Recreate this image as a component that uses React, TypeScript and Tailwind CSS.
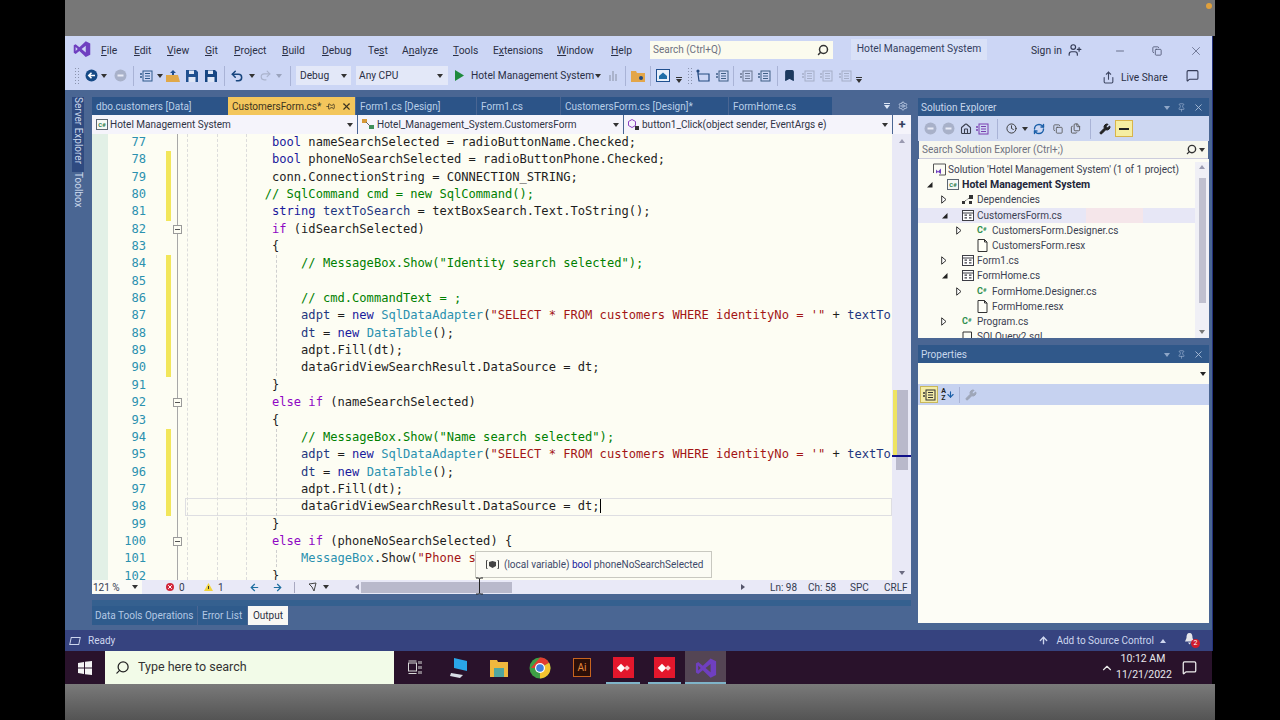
import React from "react";
import { Search, Home, Wrench, Pin, X, Settings, Minus, Undo2, Redo2, ArrowLeft, ArrowRight, ArrowUp, ArrowDown, ChevronUp, UserPlus, Copy, RefreshCw, Bookmark, MessageSquare, Share, Clock, Files } from "lucide-react";

const K = "text-[#1a1a9c]";
const C = "text-[#8f08c4]";
const S = "text-[#a31515]";
const T = "text-[#2b91af]";
const G = "text-[#008000]";
const V = "text-[#1f377f]";
const D = "text-[#1e1e1e]";

type Tok = [string, string];
type Line = { n: number; t: Tok[]; mark?: boolean; fold?: boolean; cur?: boolean };

const lines: Line[] = [
  { n: 77, t: [["            bool", K], [" nameSearchSelected = radioButtonName.Checked;", D]] },
  { n: 78, mark: true, t: [["            bool", K], [" phoneNoSearchSelected = radioButtonPhone.Checked;", D]] },
  { n: 79, mark: true, t: [["            conn.ConnectionString = CONNECTION_STRING;", D]] },
  { n: 80, mark: true, t: [["           // SqlCommand cmd = new SqlCommand();", G]] },
  { n: 81, mark: true, t: [["            string", K], [" textToSearch", V], [" = textBoxSearch.Text.ToString();", D]] },
  { n: 82, fold: true, t: [["            if", C], [" (idSearchSelected)", D]] },
  { n: 83, t: [["            {", D]] },
  { n: 84, mark: true, t: [["                // MessageBox.Show(\"Identity search selected\");", G]] },
  { n: 85, mark: true, t: [[" ", D]] },
  { n: 86, mark: true, t: [["                // cmd.CommandText = ;", G]] },
  { n: 87, mark: true, t: [["                adpt", V], [" = ", D], ["new", K], [" ", D], ["SqlDataAdapter", T], ["(", D], ["\"SELECT * FROM customers WHERE identityNo = '\"", S], [" + ", D], ["textTo", V]] },
  { n: 88, mark: true, t: [["                dt", V], [" = ", D], ["new", K], [" ", D], ["DataTable", T], ["();", D]] },
  { n: 89, mark: true, t: [["                adpt.Fill(dt);", D]] },
  { n: 90, mark: true, t: [["                dataGridViewSearchResult.DataSource = dt;", D]] },
  { n: 91, t: [["            }", D]] },
  { n: 92, fold: true, t: [["            else if", C], [" (nameSearchSelected)", D]] },
  { n: 93, t: [["            {", D]] },
  { n: 94, mark: true, t: [["                // MessageBox.Show(\"Name search selected\");", G]] },
  { n: 95, mark: true, t: [["                adpt", V], [" = ", D], ["new", K], [" ", D], ["SqlDataAdapter", T], ["(", D], ["\"SELECT * FROM customers WHERE identityNo = '\"", S], [" + ", D], ["textTo", V]] },
  { n: 96, mark: true, t: [["                dt", V], [" = ", D], ["new", K], [" ", D], ["DataTable", T], ["();", D]] },
  { n: 97, mark: true, t: [["                adpt.Fill(dt);", D]] },
  { n: 98, mark: true, cur: true, t: [["                dataGridViewSearchResult.DataSource = dt;", D]] },
  { n: 99, t: [["            }", D]] },
  { n: 100, fold: true, t: [["            else if", C], [" (phoneNoSearchSelected) {", D]] },
  { n: 101, t: [["                ", D], ["MessageBox", T], [".Show(", D], ["\"Phone s", S]] },
  { n: 102, t: [["            }", D]] },
];

const menus: [string, string, string, string][] = [
  ["", "F", "ile", "w-[33px]"],
  ["", "E", "dit", "w-[33px]"],
  ["", "V", "iew", "w-[38px]"],
  ["", "G", "it", "w-[29px]"],
  ["", "P", "roject", "w-[48px]"],
  ["", "B", "uild", "w-[40px]"],
  ["", "D", "ebug", "w-[46px]"],
  ["Te", "s", "t", "w-[34px]"],
  ["A", "n", "alyze", "w-[51px]"],
  ["", "T", "ools", "w-[40px]"],
  ["E", "x", "tensions", "w-[64px]"],
  ["", "W", "indow", "w-[54px]"],
  ["", "H", "elp", "w-[39px]"],
];

function VsLogo({ size = 18 }: { size?: number }) {
  return (
    <svg width={size} height={size} viewBox="0 0 24 24">
      <path fillRule="evenodd" fill="#6f3fc0" d="M17 1.5 23 4.5V19.5L17 22.5 8.5 14.5 3.5 18.5 1 17V7L3.5 5.5 8.5 9.5ZM17 7.5 11.5 12 17 16.5ZM3.5 9.2V14.8L6.3 12Z" />
    </svg>
  );
}
function Caret({ c = "#333" }: { c?: string }) {
  return (
    <svg width="6" height="4" viewBox="0 0 6 4" className="shrink-0">
      <path d="M0 0H6L3 4Z" fill={c} />
    </svg>
  );
}
function Sep() {
  return <div className="w-px h-[20px] bg-[#a9b3d6] shrink-0" />;
}
function Slot({ w, children }: { w: string; children?: React.ReactNode }) {
  return <div className={`${w} shrink-0 flex items-center justify-center`}>{children}</div>;
}
function Grip() {
  return <div className="w-[5px] h-[18px] shrink-0 bg-[radial-gradient(#8a93ad_1px,transparent_1px)] bg-[length:3px_3px]" />;
}
function CircleBtn({ c, arrow }: { c: string; arrow?: boolean }) {
  return (
    <svg width="13" height="13" viewBox="0 0 13 13" className="shrink-0">
      <circle cx="6.5" cy="6.5" r="6" fill={c} />
      {arrow ? <path d="M10 6.5H4M6.5 3.8 3.8 6.5 6.5 9.2" stroke="#fff" strokeWidth="1.6" fill="none" /> : <path d="M3.5 6.5H9.5" stroke="#e8ebf6" strokeWidth="2" />}
    </svg>
  );
}
function Floppy({ c = "#1f4f8f" }: { c?: string }) {
  return (
    <svg width="14" height="14" viewBox="0 0 14 14">
      <path d="M1 1H11L13 3V13H1Z" fill={c} />
      <rect x="4" y="1.5" width="5" height="3.5" fill="#dfe6f6" />
      <rect x="3.5" y="8" width="7" height="5" fill="#dfe6f6" />
    </svg>
  );
}
function SmallDocIcons({ c = "#7f8ba8" }: { c?: string }) {
  return (
    <svg width="13" height="12" viewBox="0 0 13 12" className="shrink-0">
      <rect x="3" y="1" width="9" height="10" fill="none" stroke={c} />
      <path d="M5 3.5H10M5 6H10M5 8.5H10" stroke={c} />
      <path d="M0 4H2M0 7H2" stroke={c} strokeWidth="1.5" />
    </svg>
  );
}
function FormIcon() {
  return (
    <svg width="12" height="11" viewBox="0 0 12 11">
      <rect x=".5" y=".5" width="11" height="10" fill="#fff" stroke="#3d3d45" />
      <path d="M1 3H11" stroke="#3d3d45" />
      <path d="M2.5 5.2H5M2.5 7.8H5M7 5.2H9.5M7 7.8H9.5" stroke="#3d3d45" strokeWidth="1.2" />
    </svg>
  );
}
function ResIcon() {
  return (
    <svg width="11" height="13" viewBox="0 0 11 13">
      <path d="M1 .5H7.5L10 3V12.5H1ZM7.5 .5V3H10" fill="#fffff8" stroke="#333" />
    </svg>
  );
}
function CsIcon() {
  return <span className="text-[9px] leading-none font-bold text-[#2f8f4f] whitespace-nowrap">C<span className="text-[6px] align-top">#</span></span>;
}
function ProjIcon() {
  return (
    <span className="w-[12px] h-[11px] border border-[#5c6672] bg-[#f6f8f6] flex items-center justify-center text-[6px] leading-none font-bold text-[#2f7f4f] shrink-0">C#</span>
  );
}
function DepIcon() {
  return (
    <svg width="12" height="10" viewBox="0 0 12 10">
      <path d="M3 6 8 2.5" stroke="#444" strokeDasharray="1 1" />
      <rect x="7" y="0" width="4" height="4" fill="#333" />
      <rect x="0" y="6" width="3" height="3" fill="#333" />
      <rect x="7" y="6" width="3" height="3" fill="#333" />
    </svg>
  );
}
function SolIcon() {
  return (
    <svg width="13" height="13" viewBox="0 0 13 13">
      <path d="M.5 10V1H12.5V12H6" fill="none" stroke="#555" />
      <path d="M3 6.5 5 8.5 8 5.5V11L5 9 3 10.5Z" fill="#6f3fc0" />
    </svg>
  );
}
function SqlIcon() {
  return (
    <svg width="11" height="11" viewBox="0 0 11 11">
      <path d="M1 11V1H9.5V11" fill="none" stroke="#333" />
    </svg>
  );
}
function Tri({ open }: { open?: boolean }) {
  return open ? (
    <svg width="7" height="7" viewBox="0 0 7 7">
      <path d="M6.5 1V6.5H1Z" fill="#222" />
    </svg>
  ) : (
    <svg width="6" height="9" viewBox="0 0 6 9">
      <path d="M.7 .8 5 4.5.7 8.2Z" fill="#fff" stroke="#333" />
    </svg>
  );
}

type TreeRow = { pl: string; exp?: "o" | "c"; noExp?: boolean; icon: React.ReactNode; text: string; bold?: boolean; hi?: boolean };
const tree: TreeRow[] = [
  { pl: "pl-[4px]", noExp: true, icon: <SolIcon />, text: "Solution 'Hotel Management System' (1 of 1 project)" },
  { pl: "pl-[4px]", exp: "o", icon: <ProjIcon />, text: "Hotel Management System", bold: true },
  { pl: "pl-[19px]", exp: "c", icon: <DepIcon />, text: "Dependencies" },
  { pl: "pl-[19px]", exp: "o", icon: <FormIcon />, text: "CustomersForm.cs", hi: true },
  { pl: "pl-[34px]", exp: "c", icon: <CsIcon />, text: "CustomersForm.Designer.cs" },
  { pl: "pl-[34px]", icon: <ResIcon />, text: "CustomersForm.resx" },
  { pl: "pl-[19px]", exp: "c", icon: <FormIcon />, text: "Form1.cs" },
  { pl: "pl-[19px]", exp: "o", icon: <FormIcon />, text: "FormHome.cs" },
  { pl: "pl-[34px]", exp: "c", icon: <CsIcon />, text: "FormHome.Designer.cs" },
  { pl: "pl-[34px]", icon: <ResIcon />, text: "FormHome.resx" },
  { pl: "pl-[19px]", exp: "c", icon: <CsIcon />, text: "Program.cs" },
  { pl: "pl-[19px]", icon: <SqlIcon />, text: "SQLQuery2.sql" },
];

function TitleRow() {
  return (
    <div className="h-[26px] flex items-center shrink-0 text-[#2a2f45] text-[10.3px] pt-[4px]">
      <div className="w-[36px] shrink-0 flex justify-end pr-[10px] -mt-[4px]"><VsLogo /></div>
      {menus.map(([a, u, b, w]) => (
        <div key={u + b} className={`${w} shrink-0 whitespace-nowrap`}>{a}<u>{u}</u>{b}</div>
      ))}
      <div className="w-[183px] h-[18px] bg-[#fbfbee] flex items-center justify-between px-[3px] shrink-0 text-[#6d7080] text-[10px] -mt-[3px]">
        <span>Search (Ctrl+Q)</span>
        <Search size={12} strokeWidth={3} className="text-[#333] mr-[1px] -scale-x-100" />
      </div>
      <div className="ml-[18px] w-[136px] h-[21px] bg-[#d9e1f7] text-[#34405f] flex items-center justify-center shrink-0 whitespace-nowrap -mt-[4px]">Hotel Management System</div>
      <div className="ml-[44px] w-[37px] shrink-0 whitespace-nowrap">Sign in</div>
      <UserPlus size={14} className="text-[#333a55] shrink-0 -mt-[3px]" />
      <Slot w="w-[44px] ml-[16px]"><Minus size={12} className="text-[#68708c]" /></Slot>
      <Slot w="w-[30px]"><Copy size={10} className="text-[#4d5572]" /></Slot>
      <Slot w="w-[48px]"><X size={14} strokeWidth={1.2} className="text-[#4d5572]" /></Slot>
    </div>
  );
}

function ToolRow() {
  return (
    <div className="h-[28px] pb-[1px] flex items-center shrink-0 text-[10.2px] text-[#2a2f45] pl-[9px]">
      <Grip />
      <Slot w="w-[18px] ml-[3px]"><CircleBtn c="#164a86" arrow /></Slot>
      <Slot w="w-[8px]"><Caret /></Slot>
      <Slot w="w-[16px] ml-[4px]"><CircleBtn c="#a8b1c9" /></Slot>
      <Slot w="w-[5px]" />
      <Sep />
      <Slot w="w-[24px]"><SmallDocIcons c="#2e5a8c" /></Slot>
      <Slot w="w-[4px]"><Caret /></Slot>
      <Slot w="w-[18px] ml-[2px]">
        <svg width="14" height="12" viewBox="0 0 14 12"><path d="M0 5H12L14 12H0Z" fill="#e0a848" /><path d="M7 0 10 3H8V5H6V3H4Z" fill="#1f4f8f" /></svg>
      </Slot>
      <Slot w="w-[20px]"><Floppy /></Slot>
      <Slot w="w-[18px]"><Floppy c="#174682" /></Slot>
      <Slot w="w-[4px]" />
      <Sep />
      <Slot w="w-[24px]"><Undo2 size={14} strokeWidth={2.6} className="text-[#17457e]" /></Slot>
      <Slot w="w-[6px]"><Caret /></Slot>
      <Slot w="w-[20px]"><Redo2 size={13} className="text-[#aab3cc]" /></Slot>
      <Slot w="w-[8px]"><Caret c="#9aa3bd" /></Slot>
      <Slot w="w-[7px]" />
      <Sep />
      <div className="ml-[5px] w-[55px] h-[19px] bg-[#e3e8f8] flex items-center justify-between px-[4px] shrink-0"><span>Debug</span><Caret /></div>
      <div className="ml-[5px] w-[92px] h-[19px] bg-[#e3e8f8] flex items-center justify-between px-[3px] pr-[5px] shrink-0"><span>Any CPU</span><Caret /></div>
      <Slot w="w-[23px]">
        <svg width="9" height="11" viewBox="0 0 9 11"><path d="M0 0 9 5.5 0 11Z" fill="#1e8a3c" /></svg>
      </Slot>
      <div className="w-[124px] shrink-0 whitespace-nowrap">Hotel Management System</div>
      <Slot w="w-[6px]"><Caret /></Slot>
      <Slot w="w-[24px]">
        <svg width="10" height="11" viewBox="0 0 10 11"><path d="M1 5H3V11H1ZM4 1H6V11H4ZM7 4H9V11H7Z" fill="#aab3cc" /></svg>
      </Slot>
      <Sep />
      <Slot w="w-[24px]">
        <svg width="14" height="12" viewBox="0 0 14 12"><path d="M0 1H5L6 3H14V12H0Z" fill="#e3a64a" /><circle cx="10" cy="8" r="2" fill="#234a80" /></svg>
      </Slot>
      <Sep />
      <Slot w="w-[24px]">
        <svg width="14" height="13" viewBox="0 0 14 13"><rect x=".5" y=".5" width="13" height="12" fill="#e8f0fa" stroke="#1f4f8f" /><path d="M3 7 7 3.5 11 7V10H3Z" fill="#1f6fa8" /></svg>
      </Slot>
      <Slot w="w-[7px]"><div className="border-t border-[#333] pt-px mt-[8px]"><Caret /></div></Slot>
      <Slot w="w-[8px] ml-[3px]"><Grip /></Slot>
      <Slot w="w-[20px]">
        <svg width="14" height="13" viewBox="0 0 14 13"><path d="M2 1V5M2 5H13V12H3Z" fill="none" stroke="#234a80" strokeWidth="1.2" /><circle cx="2" cy="2" r="1.6" fill="#234a80" /></svg>
      </Slot>
      <Slot w="w-[18px]"><SmallDocIcons c="#3f5f86" /></Slot>
      <Slot w="w-[2px]" />
      <Sep />
      <Slot w="w-[24px]"><SmallDocIcons c="#6a7690" /></Slot>
      <Slot w="w-[12px]"><SmallDocIcons c="#3f5f86" /></Slot>
      <Slot w="w-[7px]" />
      <Sep />
      <Slot w="w-[22px]"><Bookmark size={13} fill="#1c3a5f" className="text-[#1c3a5f]" /></Slot>
      <Slot w="w-[16px]"><SmallDocIcons c="#a5aec7" /></Slot>
      <Slot w="w-[20px]"><SmallDocIcons c="#a5aec7" /></Slot>
      <Slot w="w-[18px]"><SmallDocIcons c="#a5aec7" /></Slot>
      <Slot w="w-[10px]"><div className="border-t border-[#333] pt-px mt-[8px]"><Caret /></div></Slot>
      <div className="ml-[238px] w-[63px] flex items-center gap-[6px] shrink-0 whitespace-nowrap mt-[4px]"><Share size={13} className="text-[#3d4662] shrink-0" />Live Share</div>
      <Slot w="w-[16px] ml-[19px]"><MessageSquare size={13} className="text-[#333a55]" /></Slot>
    </div>
  );
}

const docTabs: [string, string][] = [
  ["dbo.customers [Data]", "w-[136px]"],
  ["Form1.cs [Design]", "w-[120px]"],
  ["Form1.cs", "w-[83px]"],
  ["CustomersForm.cs [Design]*", "w-[167px]"],
  ["FormHome.cs", "w-[103px]"],
];

function DocTab({ label, w }: { label: string; w: string }) {
  return <div className={`${w} h-full bg-[#2c5488] text-[#b9cfe8] pl-[4px] flex items-center shrink-0 whitespace-nowrap mr-px`}>{label}</div>;
}

function TabsRow() {
  return (
    <div className="h-[18px] flex items-center text-[10px] shrink-0">
      <DocTab label={docTabs[0][0]} w={docTabs[0][1]} />
      <div className="w-[127px] h-full bg-[#f3c65c] text-[#3b3320] pl-[4px] flex items-center justify-between pr-[3px] shrink-0 whitespace-nowrap -ml-px">
        <span>CustomersForm.cs*</span>
        <span className="flex items-center gap-[6px]"><Pin size={9} className="rotate-90" /><X size={11} strokeWidth={2.4} /></span>
      </div>
      <div className="w-px shrink-0" />
      <DocTab label={docTabs[1][0]} w={docTabs[1][1]} />
      <DocTab label={docTabs[2][0]} w={docTabs[2][1]} />
      <DocTab label={docTabs[3][0]} w={docTabs[3][1]} />
      <DocTab label={docTabs[4][0]} w={docTabs[4][1]} />
      <div className="flex-1" />
      <Slot w="w-[16px]"><div className="border-t border-[#dce6f5] pt-px"><Caret c="#dce6f5" /></div></Slot>
      <Slot w="w-[16px]"><Settings size={10} className="text-[#c6d4ea]" /></Slot>
    </div>
  );
}

function ComboRow() {
  return (
    <div className="h-[19px] flex items-center text-[10px] text-[#2f3345] shrink-0 gap-px">
      <div className="w-[265px] h-full bg-[#f5f4fb] flex items-center justify-between px-[4px] shrink-0 whitespace-nowrap">
        <span className="flex items-center gap-[1px]"><ProjIcon /><span className="ml-[1px]">Hotel Management System</span></span><Caret />
      </div>
      <div className="w-[265px] h-full bg-[#f5f4fb] flex items-center justify-between px-[4px] shrink-0 whitespace-nowrap">
        <span className="flex items-center gap-[3px]">
          <svg width="12" height="11" viewBox="0 0 12 11"><rect x="0" y="0" width="5" height="4" fill="#d79a3a" /><rect x="7" y="6" width="5" height="4" fill="#3e8f5a" /><path d="M4 3 8 7" stroke="#666" /></svg>
          Hotel_Management_System.CustomersForm
        </span><Caret />
      </div>
      <div className="w-[268px] h-full bg-[#f5f4fb] flex items-center justify-between px-[4px] shrink-0 whitespace-nowrap">
        <span className="flex items-center gap-[3px]">
          <svg width="11" height="11" viewBox="0 0 11 11"><path d="M4 .5 7.5 2.5V6.5L4 8.5.5 6.5V2.5Z" fill="none" stroke="#8a3fc0" /><rect x="7" y="7" width="4" height="4" fill="#333" /></svg>
          button1_Click(object sender, EventArgs e)
        </span><Caret />
      </div>
      <div className="flex-1 h-full bg-[#f5f4fb] flex items-center justify-center text-[13px] font-bold text-[#35405f]">+</div>
    </div>
  );
}

function EditorRow({ l }: { l: Line }) {
  return (
    <div className="h-[17.35px] flex leading-[17.35px]">
      <div className="w-[16px] shrink-0 bg-[#e2f0e6]" />
      <div className="w-[38px] shrink-0 text-right text-[#2b91af]">{l.n}</div>
      <div className="w-[20px] shrink-0" />
      <div className={`w-[5px] shrink-0 ${l.mark ? "bg-[#f2e65a]" : ""}`} />
      <div className="w-[13.6px] shrink-0 relative flex items-center justify-center">
        <div className="absolute left-[6px] inset-y-0 w-px bg-[#a8a8a8]" />
        {l.fold && <div className="relative w-[9px] h-[9px] border border-[#9a9a9a] bg-[#fdfdf3] flex items-center justify-center"><div className="w-[5px] h-px bg-[#555]" /></div>}
      </div>
      <div className={`flex-1 whitespace-pre overflow-hidden ${l.cur ? "outline outline-1 -outline-offset-1 outline-[#dedee2]" : ""}`}>
        {l.t.map(([s, c], i) => <span key={i} className={c}>{s}</span>)}
        {l.cur && <span className="border-l border-black" />}
      </div>
    </div>
  );
}

function Editor() {
  return (
    <div className="h-[446px] flex shrink-0 bg-[#fdfdf3] font-['DejaVu_Sans_Mono'] text-[12.1px]">
      <div className="flex-1 relative overflow-hidden">
        {lines.map((l) => <EditorRow key={l.n} l={l} />)}
        <div className="absolute left-[95px] inset-y-0 border-l border-dashed border-[#dcdcdc]" />
        <div className="absolute left-[125px] inset-y-0 border-l border-dashed border-[#dcdcdc]" />
        <div className="absolute left-[154px] inset-y-0 border-l border-dashed border-[#dcdcdc]" />
        <div className="absolute left-[184px] top-[121px] h-[121px] border-l border-dashed border-[#cfcfcf]" />
        <div className="absolute left-[184px] top-[295px] h-[87px] border-l border-dashed border-[#cfcfcf]" />
        <div className="absolute left-[184px] top-[416px] h-[17px] border-l border-dashed border-[#cfcfcf]" />
        <div className="absolute left-[383px] top-[417px] w-[237px] h-[27px] bg-[#fbfbf4] border border-[#c8c8c0] flex items-center pl-[10px] gap-[5px] font-['Roboto'] text-[10px] text-[#3d4a6a] whitespace-nowrap">
          <svg width="13" height="9" viewBox="0 0 13 9" className="shrink-0"><path d="M1.5 .5H.5V8.5H1.5M11.5 .5H12.5V8.5H11.5" fill="none" stroke="#444" /><path d="M3 2 6.5 1 10 2V6L6.5 8 3 6Z" fill="#444" /></svg>
          <span>(local variable) <span className="text-[#1a1a9c]">bool</span> phoneNoSearchSelected</span>
        </div>
      </div>
      <div className="w-[19px] shrink-0 bg-[#e9e9f6] flex flex-col items-center justify-between py-[5px] relative">
        <div className="rotate-180"><Caret c="#9a9ab0" /></div>
        <Caret c="#6b6b80" />
        <div className="absolute left-[4px] top-[256px] w-[12px] h-[80px] bg-[#b9b9cb]" />
        <div className="absolute left-[1px] top-[256px] w-[4px] h-[66px] bg-[#efe462]" />
        <div className="absolute left-0 top-[321px] w-[19px] h-[2px] bg-[#10108a]" />
      </div>
    </div>
  );
}

function EditorBar() {
  return (
    <div className="h-[14px] flex items-center bg-[#e9e9f7] text-[10px] text-[#333a50] shrink-0 relative">
      <div className="w-[50px] h-full bg-[#fbfbf6] flex items-center justify-between px-px pr-[4px] shrink-0"><span>121 %</span><Caret /></div>
      <Slot w="w-[12px] ml-[22px]"><div className="w-[8px] h-[8px] rounded-full bg-[#d2263a] flex items-center justify-center"><X size={6} strokeWidth={4} className="text-white" /></div></Slot>
      <span className="ml-[3px] w-[20px] shrink-0">0</span>
      <Slot w="w-[14px] ml-[2px]">
        <svg width="9" height="8" viewBox="0 0 9 8"><path d="M4.5 0 9 8H0Z" fill="#f2d43c" /><rect x="4" y="3" width="1" height="3" fill="#333" /></svg>
      </Slot>
      <span className="ml-[3px] w-[29px] shrink-0">1</span>
      <Slot w="w-[14px]"><ArrowLeft size={11} strokeWidth={2.6} className="text-[#1f6fa0]" /></Slot>
      <Slot w="w-[14px] ml-[9px]"><ArrowRight size={11} strokeWidth={2.6} className="text-[#1f6fa0]" /></Slot>
      <div className="w-px h-[11px] bg-[#a8a8c0] ml-[10px] shrink-0" />
      <Slot w="w-[14px] ml-[11px]">
        <svg width="10" height="10" viewBox="0 0 10 10"><path d="M1 2 8 1 6 9 4 5Z" fill="none" stroke="#444" /></svg>
      </Slot>
      <Slot w="w-[7px] ml-[2px]"><Caret /></Slot>
      <div className="ml-[24px] w-[7px] flex justify-center shrink-0"><div className="rotate-90"><Caret c="#8a8aa0" /></div></div>
      <div className="w-[378px] h-[11px] ml-[1px] shrink-0 relative">
        <div className="w-[151px] h-full bg-[#b9b9cb]" />
      </div>
      <div className="w-[7px] flex justify-center shrink-0"><div className="-rotate-90"><Caret c="#55556a" /></div></div>
      <span className="ml-[24px] w-[38px] shrink-0 whitespace-nowrap">Ln: 98</span>
      <span className="w-[42px] shrink-0 whitespace-nowrap">Ch: 58</span>
      <span className="w-[34px] shrink-0">SPC</span>
      <span className="w-[24px] shrink-0">CRLF</span>
      <svg className="absolute left-[383px] -top-[3px]" width="9" height="18" viewBox="0 0 9 18"><path d="M1 1H3.5L4.5 2 5.500 1H8M4.500 2V16M1 17H3.500L4.500 16 5.500 17H8" fill="none" stroke="#222" /></svg>
    </div>
  );
}

function PanelTitle({ label }: { label: string }) {
  return (
    <div className="h-[18px] bg-[#30588a] text-[#c8d7ec] text-[10px] flex items-center justify-between pl-[3px] pr-[5px] pt-[1px] shrink-0">
      <span>{label}</span>
      <span className="flex items-center gap-[7px]"><Caret c="#8fa7c8" /><Pin size={9} className="text-[#8fa7c8]" /><X size={11} className="text-[#a9bcd6]" /></span>
    </div>
  );
}

function SolutionExplorer() {
  return (
    <div className="h-[240px] flex flex-col shrink-0">
      <PanelTitle label="Solution Explorer" />
      <div className="h-[25px] bg-[#cdd7f2] flex items-center pl-[5px] shrink-0">
        <Slot w="w-[15px]"><CircleBtn c="#a8b1c9" /></Slot>
        <Slot w="w-[16px] ml-[2px]"><CircleBtn c="#a8b1c9" /></Slot>
        <Slot w="w-[17px] ml-[1px]"><Home size={12} strokeWidth={2.2} className="text-[#3a3f4e]" /></Slot>
        <Slot w="w-[17px]"><SmallDocIcons c="#7a3fb0" /></Slot>
        <Slot w="w-[6px]" />
        <Sep />
        <Slot w="w-[19px] ml-[4px]"><Clock size={11} className="text-[#333]" /></Slot>
        <Slot w="w-[8px]"><Caret /></Slot>
        <Slot w="w-[20px]"><RefreshCw size={12} strokeWidth={2.8} className="text-[#1b5fa8]" /></Slot>
        <Slot w="w-[17px]"><Copy size={10} className="text-[#555]" /></Slot>
        <Slot w="w-[19px]"><Files size={11} className="text-[#555]" /></Slot>
        <Slot w="w-[5px]" />
        <Sep />
        <Slot w="w-[21px] ml-[3px]"><Wrench size={12} fill="#222" className="text-[#222]" /></Slot>
        <div className="w-[18px] h-[17px] bg-[#f6eea2] border border-[#d9b44a] flex items-center justify-center shrink-0"><div className="w-[10px] h-[2px] bg-[#222]" /></div>
      </div>
      <div className="h-[18px] bg-[#f7f7ee] mx-px flex items-center justify-between pl-[3px] pr-[3px] text-[10px] text-[#6d7080] shrink-0 border-b border-[#ccd]">
        <span>Search Solution Explorer (Ctrl+;)</span>
        <span className="flex items-center gap-[2px]"><Search size={11} strokeWidth={3} className="text-[#333] -scale-x-100" /><Caret /></span>
      </div>
      <div className="flex-1 min-h-0 bg-[#fcfcf4] flex overflow-hidden pt-[3px] text-[10px] text-[#3b3f52]">
        <div className="flex-1 min-w-0 overflow-hidden">
          {tree.map((r) => (
            <div key={r.text} className={`h-[15.2px] flex items-center whitespace-nowrap relative ${r.pl} ${r.hi ? "bg-[#e7e7f6]" : ""}`}>
              {r.hi && <div className="absolute left-[168px] w-[57px] inset-y-0 bg-[#f5e6ea]" />}
              {!r.noExp && <div className="w-[14px] shrink-0 flex justify-center relative">{r.exp && <Tri open={r.exp === "o"} />}</div>}
              <div className="w-[26px] shrink-0 pl-[11px] flex items-center relative">{r.icon}</div>
              <span className={`relative ${r.bold ? "font-bold text-[10.5px] text-[#23263a]" : ""}`}>{r.text}</span>
            </div>
          ))}
        </div>
        <div className="w-[14px] shrink-0 bg-[#f0f0f6] flex flex-col items-center pt-[3px] relative">
          <div className="rotate-180"><Caret c="#9a9ab0" /></div>
          <div className="w-[7px] h-[125px] bg-[#c0c0cf] mt-[9px]" />
          <div className="absolute bottom-[4px]"><Caret c="#777" /></div>
        </div>
      </div>
    </div>
  );
}

function Properties() {
  return (
    <div className="flex-1 flex flex-col mt-[7px] min-h-0">
      <PanelTitle label="Properties" />
      <div className="h-[21px] bg-[#fcfcf2] flex items-center justify-end pr-[3px] shrink-0"><Caret c="#222" /></div>
      <div className="h-[21px] bg-[#c6d2f0] flex items-center pl-[2px] shrink-0">
        <div className="w-[18px] h-[17px] bg-[#f4eda8] border border-[#c9b85a] flex items-center justify-center shrink-0"><SmallDocIcons c="#333" /></div>
        <Slot w="w-[20px]">
          <span className="text-[7px] font-bold leading-[7px] text-[#222]">A<br />Z</span>
          <ArrowDown size={9} strokeWidth={3} className="text-[#1b5fa8]" />
        </Slot>
        <div className="w-px h-[16px] bg-[#a9b3d6] ml-[1px] shrink-0" />
        <Slot w="w-[22px]"><Wrench size={12} fill="#9ea6b8" className="text-[#9ea6b8]" /></Slot>
      </div>
      <div className="flex-1 bg-[#fdfdf6]" />
    </div>
  );
}

function Body() {
  return (
    <div className="h-[540px] bg-[#4a6693] flex shrink-0">
      <div className="w-[27px] shrink-0 pt-[7px] pl-[7px] text-[10px] text-[#cbd8ec]">
        <div className="w-[12px] h-[75px] bg-[#2e4a80] flex items-center [writing-mode:vertical-rl] whitespace-nowrap">Server Explorer</div>
        <div className="w-[12px] h-[36px] flex items-center justify-center [writing-mode:vertical-rl] whitespace-nowrap">Toolbox</div>
      </div>
      <div className="w-[819px] shrink-0 flex flex-col pt-[7px]">
        <TabsRow />
        <ComboRow />
        <Editor />
        <EditorBar />
        <div className="h-[6px] mt-[6px] bg-[#35608f] shrink-0" />
        <div className="h-[19px] flex text-[10px] shrink-0 gap-px">
          <div className="w-[105px] bg-[#2f5b8c] text-[#b3c8e4] flex items-center pl-[3px] whitespace-nowrap">Data Tools Operations</div>
          <div className="w-[49px] bg-[#2f5b8c] text-[#b3c8e4] flex items-center pl-[4px] whitespace-nowrap">Error List</div>
          <div className="w-[40px] bg-[#f8f8f4] text-[#2b2f40] flex items-center justify-center">Output</div>
        </div>
      </div>
      <div className="w-[291px] ml-[7px] shrink-0 flex flex-col pt-[8px] pb-[7px]">
        <SolutionExplorer />
        <Properties />
      </div>
    </div>
  );
}

function StatusBar() {
  return (
    <div className="h-[21px] bg-[#36437f] text-[#cdd6ee] text-[10px] flex items-center shrink-0 pl-[3px] pr-[12px]">
      <Slot w="w-[14px]"><div className="w-[10px] h-[8px] border border-[#cdd6ee] -skew-x-12" /></Slot>
      <span className="ml-[6px]">Ready</span>
      <div className="flex-1" />
      <ArrowUp size={11} strokeWidth={3} />
      <span className="ml-[7px]">Add to Source Control</span>
      <div className="ml-[6px] rotate-180"><Caret c="#cdd6ee" /></div>
      <div className="ml-[18px] relative w-[16px] h-[15px]">
        <svg width="11" height="12" viewBox="0 0 11 12"><path d="M5.500 0C8 0 8.500 2 8.500 5L10 8.500H1L2.500 5C2.500 2 3 0 5.500 0ZM4 9.500H7L5.500 11.500Z" fill="#e6e6ea" /></svg>
        <div className="absolute right-0 bottom-0 w-[9px] h-[9px] rounded-full bg-[#d01c2c] text-white text-[7px] leading-[9px] text-center">2</div>
      </div>
    </div>
  );
}

function AnyDesk() {
  return (
    <div className="w-[21px] h-[21px] bg-[#e3172c] flex items-center justify-center gap-px">
      <div className="w-[6px] h-[6px] bg-white rotate-45" />
      <div className="w-[4px] h-[4px] bg-[#f8c8c8] rotate-45" />
    </div>
  );
}

function Taskbar() {
  return (
    <div className="h-[33px] w-[1147px] bg-[#29122b] flex items-center shrink-0">
      <Slot w="w-[40px]">
        <svg width="14" height="14" viewBox="0 0 14 14"><path d="M0 2 6 1V6.500H0ZM7 .8 14 0V6.500H7ZM0 7.500H6V13L0 12ZM7 7.500H14V14L7 13.200Z" fill="#f4f4f4" /></svg>
      </Slot>
      <div className="w-[289px] h-full bg-[#f2fbe8] flex items-center pl-[10px] gap-[8px] text-[12.5px] text-[#333] shrink-0 whitespace-nowrap">
        <Search size={15} className="-scale-x-100 text-[#222]" />
        <span>Type here to search</span>
      </div>
      <Slot w="w-[42px]">
        <svg width="14" height="15" viewBox="0 0 14 15" fill="none" stroke="#d8d8d8"><rect x=".5" y="3" width="8" height="8" /><path d="M.5 1H8.500M.5 13.500H8.500M11 1V4M13 1V4M11 6V9M13 6V9M11 11V14M13 11V14" /></svg>
      </Slot>
      <Slot w="w-[44px]">
        <svg width="19" height="22" viewBox="0 0 19 22"><path d="M5 1 18 4V14L5 11Z" fill="#2aa6e8" /><path d="M2 16 14 18 11 21 1 19Z" fill="#d8dde6" /></svg>
      </Slot>
      <Slot w="w-[38px]">
        <svg width="18" height="18" viewBox="0 0 18 18"><path d="M0 1H7L8 3H18V18H0Z" fill="#eeb83e" /><rect x="4" y="9" width="10" height="9" fill="#4fa6a0" /></svg>
      </Slot>
      <Slot w="w-[44px]">
        <svg width="22" height="22" viewBox="0 0 22 22"><circle cx="11" cy="11" r="10.500" fill="#3e9f45" /><path d="M11 .5A10.500 10.500 0 0 1 20.100 5.800L11 11H1.900Z" fill="#e23c30" /><path d="M20.100 5.800A10.500 10.500 0 0 1 11 21.500L11 11Z" fill="#f4c430" /><circle cx="11" cy="11" r="5" fill="#fff" /><circle cx="11" cy="11" r="3.800" fill="#3f7fdc" /></svg>
      </Slot>
      <Slot w="w-[40px]">
        <div className="w-[18px] h-[19px] bg-[#2c0f08] border border-[#c8641e] text-[#e88a3c] text-[10px] flex items-center justify-center leading-none">Ai</div>
      </Slot>
      <div className="w-[34px] h-full shrink-0 flex items-center justify-center ml-[4px] relative"><AnyDesk /><div className="absolute bottom-0 inset-x-0 h-[2px] bg-[#7fb3c8]" /></div>
      <div className="w-[33px] h-full shrink-0 flex items-center justify-center ml-[8px] relative"><AnyDesk /><div className="absolute bottom-0 inset-x-0 h-[2px] bg-[#7fb3c8]" /></div>
      <div className="w-[41px] h-full shrink-0 flex items-center justify-center bg-[#544554] relative ml-[4px]"><VsLogo size={22} /><div className="absolute bottom-0 inset-x-0 h-[2px] bg-[#7fb3c8]" /></div>
      <div className="flex-1" />
      <ChevronUp size={14} className="text-[#e8e8e8] shrink-0" />
      <div className="ml-[2px] w-[54px] text-center text-[10.5px] leading-[16px] text-[#e8e8ee] shrink-0 whitespace-nowrap -mt-[1px]">10:12 AM<br />11/21/2022</div>
      <Slot w="w-[38px]"><MessageSquare size={15} className="text-[#eee]" /></Slot>
      <div className="w-[4px] shrink-0" />
    </div>
  );
}

export default function App() {
  return (
    <div className="w-[1280px] h-[720px] bg-black flex justify-center overflow-hidden font-['Roboto',sans-serif]">
      <div className="w-[1150px] flex flex-col">
        <div className="h-[36px] bg-[#777777] shrink-0 flex justify-end pr-[3px] pt-[3px]">
          <div className="w-[6px] h-[6px] rounded-full bg-[#e0a03c]" />
        </div>
        <div className="w-[1148px] bg-[#ccd6f5] flex flex-col border-r border-[#23307a] shrink-0">
          <TitleRow />
          <ToolRow />
          <Body />
          <StatusBar />
        </div>
        <Taskbar />
        <div className="flex-1 bg-gradient-to-b from-[#7a7a7a] to-[#545454]" />
      </div>
    </div>
  );
}
